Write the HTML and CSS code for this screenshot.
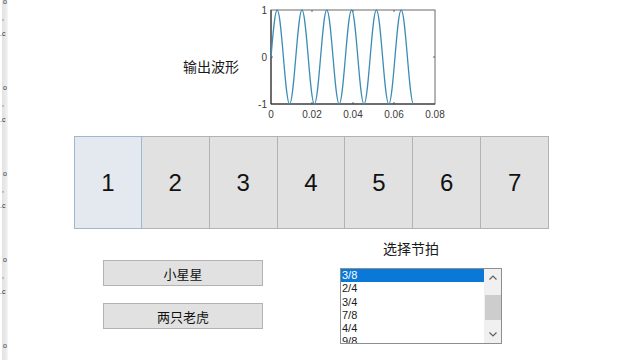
FILE: index.html
```html
<!DOCTYPE html>
<html>

  <head>
    <meta charset="UTF-8">
    <title>Piano</title>
    <link rel="stylesheet" href="styles.css">
  </head>

  <body>
    <div class="screen">
      <div class="edge">
	<div class="edgeMark"><i class="mO">o</i><i class="mComma">,</i><i class="mC">. c</i></div>
	<div class="edgeMark"><i class="mO">o</i><i class="mComma">,</i><i class="mC">. c</i></div>
	<div class="edgeMark"><i class="mO">o</i><i class="mComma">,</i><i class="mC">. c</i></div>
	<div class="edgeMark"><i class="mO">o</i><i class="mComma">,</i><i class="mC">. c</i></div>
	<div class="edgeMark"><i class="mO">o</i></div>
      </div>
      <div class="figure">
	<div class="scope">
	  <span class="scopeLabel">输出波形</span>
	  <svg class="plot" width="190" height="122" viewBox="0 0 190 122">
	    <rect x="16" y="10" width="164" height="94" fill="#fff" stroke="#6a6a6a" stroke-width="1"/>
	    <path d="M16 10 V104 H180" fill="none" stroke="#262626" stroke-width="1"/>
	    <path d="M57 104 v-2 M98 104 v-2 M139 104 v-2 M57 10 v2 M98 10 v2 M139 10 v2 M16 57 h2 M180 57 h-2" stroke="#444" stroke-width="0.8"/>
	    <path class="wave" d="M16 57
	      c2.02 -24.08 3.96 -47 6.2 -47 c2.24 0 4.18 22.92 6.2 47 c2.02 24.08 3.96 47 6.2 47 c2.24 0 4.18 -22.92 6.2 -47
	      c2.02 -24.08 3.96 -47 6.2 -47 c2.24 0 4.18 22.92 6.2 47 c2.02 24.08 3.96 47 6.2 47 c2.24 0 4.18 -22.92 6.2 -47
	      c2.02 -24.08 3.96 -47 6.2 -47 c2.24 0 4.18 22.92 6.2 47 c2.02 24.08 3.96 47 6.2 47 c2.24 0 4.18 -22.92 6.2 -47
	      c2.02 -24.08 3.96 -47 6.2 -47 c2.24 0 4.18 22.92 6.2 47 c2.02 24.08 3.96 47 6.2 47 c2.24 0 4.18 -22.92 6.2 -47
	      c2.02 -24.08 3.96 -47 6.2 -47 c2.24 0 4.18 22.92 6.2 47 c2.02 24.08 3.96 47 6.2 47 c2.24 0 4.18 -22.92 6.2 -47
	      c2.02 -24.08 3.96 -47 6.2 -47 c2.24 0 4.18 22.92 6.2 47 c2.02 24.08 3.96 47 6.2 47"/>
	    <g class="tick">
	      <text x="12" y="13.5" text-anchor="end">1</text>
	      <text x="12" y="60.5" text-anchor="end">0</text>
	      <text x="12" y="107.5" text-anchor="end">-1</text>
	      <text x="16" y="118" text-anchor="middle">0</text>
	      <text x="57" y="118" text-anchor="middle">0.02</text>
	      <text x="98" y="118" text-anchor="middle">0.04</text>
	      <text x="139" y="118" text-anchor="middle">0.06</text>
	      <text x="180" y="118" text-anchor="middle">0.08</text>
	    </g>
	  </svg>
	</div>
	<div class="keys">
	  <button type="button" class="key active">1</button>
	  <button type="button" class="key">2</button>
	  <button type="button" class="key">3</button>
	  <button type="button" class="key">4</button>
	  <button type="button" class="key">5</button>
	  <button type="button" class="key">6</button>
	  <button type="button" class="key">7</button>
	</div>
	<div class="controls">
	  <div class="songs">
	    <button type="button" class="song">小星星</button>
	    <button type="button" class="song">两只老虎</button>
	  </div>
	  <div class="meter">
	    <div class="meterLabel">选择节拍</div>
	    <div class="listbox">
	      <div class="items">
		<div class="item selected">3/8</div>
		<div class="item">2/4</div>
		<div class="item">3/4</div>
		<div class="item">7/8</div>
		<div class="item">4/4</div>
		<div class="item">9/8</div>
	      </div>
	      <div class="scrollbar">
		<div class="arrow">
		  <svg width="8" height="5" viewBox="0 0 8 5"><polyline points="0.5,4.5 4,1 7.5,4.5" fill="none" stroke="#606060" stroke-width="1.2"/></svg>
		</div>
		<div class="track"><div class="thumb"></div></div>
		<div class="arrow">
		  <svg width="8" height="5" viewBox="0 0 8 5"><polyline points="0.5,0.5 4,4 7.5,0.5" fill="none" stroke="#606060" stroke-width="1.2"/></svg>
		</div>
	      </div>
	    </div>
	  </div>
	</div>
      </div>
    </div>
  </body>

</html>
```

FILE: styles.css
```css
      body {
	  margin: 0px;
	  background-color: #ffffff;
	  font-family: "Liberation Sans", "Noto Sans CJK SC", sans-serif;
	  color: #000000;
      }
      .screen {
	  display: flex;
	  height: 360px;
	  overflow: hidden;
      }
      .edge {
	  flex: none;
	  width: 8px;
	  background: linear-gradient(to right, #ffffff 0px, #ffffff 2px, #e2e2e2 2px, #ebebeb 6px, #f6f6f6 8px);
	  font-size: 7px;
	  line-height: 7px;
	  color: #333333;
	  overflow: hidden;
      }
      .edgeMark {
	  height: 86px;
      }
      .edgeMark:first-child {
	  margin-top: -2px;
      }
      .edgeMark i {
	  display: block;
	  font-style: normal;
	  white-space: pre;
      }
      .mO {
	  padding-left: 3px;
	  height: 16px;
      }
      .mComma {
	  padding-left: 2px;
	  height: 16px;
      }
      .mC {
	  padding-left: 0px;
	  letter-spacing: -1px;
      }
      .figure {
	  flex: 1;
      }
      .scope {
	  display: flex;
	  align-items: center;
	  height: 122px;
	  padding-left: 175px;
      }
      .scopeLabel {
	  width: 56px;
	  font-size: 14px;
	  line-height: 16px;
	  margin-top: 12px;
	  color: #1a1a1a;
      }
      .plot {
	  display: block;
	  margin-left: 16px;
      }
      .wave {
	  fill: none;
	  stroke: #3d8cb4;
	  stroke-width: 1.3;
      }
      .tick text {
	  font-family: "Liberation Sans", sans-serif;
	  font-size: 10px;
	  fill: #3a3a3a;
      }
      .keys {
	  display: grid;
	  grid-template-columns: repeat(7, 1fr);
	  width: 475px;
	  height: 93px;
	  margin-top: 14px;
	  margin-left: 66px;
      }
      .key {
	  margin: 0px;
	  padding: 0px;
	  border: 1px solid #b2b2b2;
	  background-color: #e1e1e1;
	  font-family: "Liberation Sans", sans-serif;
	  font-size: 24px;
	  color: #111111;
      }
      .key + .key {
	  border-left: none;
      }
      .key.active {
	  background-color: #e4e9ef;
	  border-color: #9fb7d0;
      }
      .controls {
	  display: flex;
      }
      .songs {
	  display: flex;
	  flex-direction: column;
	  gap: 17px;
	  padding-top: 31px;
	  margin-left: 95px;
      }
      .song {
	  width: 160px;
	  height: 26px;
	  margin: 0px;
	  padding: 0px;
	  border: 1px solid #b2b2b2;
	  background-color: #e1e1e1;
	  font-family: "Liberation Sans", "Noto Sans CJK SC", sans-serif;
	  font-size: 13px;
	  color: #111111;
      }
      .meter {
	  margin-left: 77px;
	  padding-top: 12px;
      }
      .meterLabel {
	  margin-left: 43px;
	  font-size: 14px;
	  line-height: 16px;
	  color: #1a1a1a;
      }
      .listbox {
	  display: flex;
	  box-sizing: border-box;
	  width: 162px;
	  height: 76px;
	  margin-top: 11px;
	  border: 1px solid #8a8f96;
	  background-color: #ffffff;
      }
      .items {
	  flex: 1;
	  overflow: hidden;
	  font-size: 11px;
	  line-height: 13.3px;
	  color: #1a1a1a;
      }
      .item {
	  padding-left: 1px;
      }
      .item.selected {
	  background-color: #0a78d7;
	  color: #ffffff;
      }
      .scrollbar {
	  display: flex;
	  flex-direction: column;
	  width: 17px;
	  background-color: #f0f0f0;
      }
      .arrow {
	  display: flex;
	  align-items: center;
	  justify-content: center;
	  height: 17px;
      }
      .arrow svg {
	  display: block;
      }
      .track {
	  flex: 1;
      }
      .thumb {
	  height: 25px;
	  margin-top: 9px;
	  margin-left: 1px;
	  background-color: #cdcdcd;
      }
```
